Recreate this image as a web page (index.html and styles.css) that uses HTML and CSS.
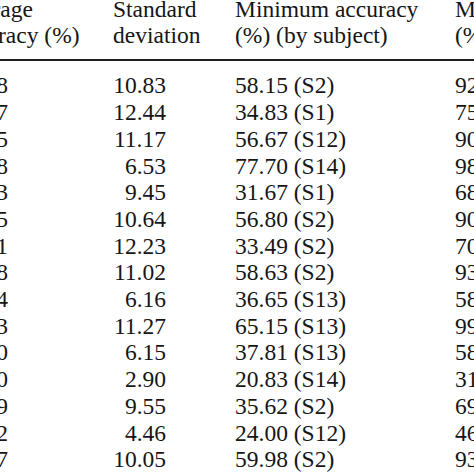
FILE: index.html
```html
<!DOCTYPE html>
<html>
<head>
<meta charset="utf-8">
<link rel="stylesheet" href="styles.css">
</head>
<body>
<div class="table">
  <div class="row head">
    <div class="cell">Average<br>accuracy (%)</div>
    <div class="cell">Standard<br>deviation</div>
    <div class="cell">Minimum accuracy<br>(%) (by subject)</div>
    <div class="cell">Maximum accuracy<br>(%) (by subject)</div>
  </div>
  <div class="rule"></div>
  <div class="body">
    <div class="row"><div class="cell">78.28</div><div class="cell"><span class="num">10.83</span></div><div class="cell">58.15 (S2)</div><div class="cell">92.50 (S9)</div></div>
    <div class="row"><div class="cell">58.17</div><div class="cell"><span class="num">12.44</span></div><div class="cell">34.83 (S1)</div><div class="cell">75.33 (S3)</div></div>
    <div class="row"><div class="cell">76.05</div><div class="cell"><span class="num">11.17</span></div><div class="cell">56.67 (S12)</div><div class="cell">90.83 (S9)</div></div>
    <div class="row"><div class="cell">88.98</div><div class="cell"><span class="num">6.53</span></div><div class="cell">77.70 (S14)</div><div class="cell">98.33 (S9)</div></div>
    <div class="row"><div class="cell">51.53</div><div class="cell"><span class="num">9.45</span></div><div class="cell">31.67 (S1)</div><div class="cell">68.33 (S9)</div></div>
    <div class="row"><div class="cell">76.55</div><div class="cell"><span class="num">10.64</span></div><div class="cell">56.80 (S2)</div><div class="cell">90.17 (S9)</div></div>
    <div class="row"><div class="cell">54.31</div><div class="cell"><span class="num">12.23</span></div><div class="cell">33.49 (S2)</div><div class="cell">70.67 (S3)</div></div>
    <div class="row"><div class="cell">77.18</div><div class="cell"><span class="num">11.02</span></div><div class="cell">58.63 (S2)</div><div class="cell">93.33 (S9)</div></div>
    <div class="row"><div class="cell">46.94</div><div class="cell"><span class="num">6.16</span></div><div class="cell">36.65 (S13)</div><div class="cell">58.00 (S9)</div></div>
    <div class="row"><div class="cell">81.83</div><div class="cell"><span class="num">11.27</span></div><div class="cell">65.15 (S13)</div><div class="cell">99.17 (S9)</div></div>
    <div class="row"><div class="cell">47.10</div><div class="cell"><span class="num">6.15</span></div><div class="cell">37.81 (S13)</div><div class="cell">58.50 (S9)</div></div>
    <div class="row"><div class="cell">25.80</div><div class="cell"><span class="num">2.90</span></div><div class="cell">20.83 (S14)</div><div class="cell">31.67 (S9)</div></div>
    <div class="row"><div class="cell">51.69</div><div class="cell"><span class="num">9.55</span></div><div class="cell">35.62 (S2)</div><div class="cell">69.17 (S9)</div></div>
    <div class="row"><div class="cell">34.82</div><div class="cell"><span class="num">4.46</span></div><div class="cell">24.00 (S12)</div><div class="cell">46.67 (S9)</div></div>
    <div class="row"><div class="cell">78.97</div><div class="cell"><span class="num">10.05</span></div><div class="cell">59.98 (S2)</div><div class="cell">93.33 (S9)</div></div>
  </div>
</div>
</body>
</html>
```
FILE: styles.css
```css
html, body {
  margin: 0;
  padding: 0;
  background: #ffffff;
  overflow: hidden;
}
.table {
  margin-left: -45px;
  margin-top: -3.6px;
  width: 800px;
  font-family: "Liberation Serif", "Times New Roman", serif;
  font-size: 23.5px;
  color: #161616;
}
.row {
  display: grid;
  grid-template-columns: 158px 122px 220px auto;
  white-space: nowrap;
}
.head {
  line-height: 26px;
}
.rule {
  height: 2px;
  background: #1e1e1e;
  margin-top: 11px;
  margin-bottom: 11px;
}
.body .row {
  line-height: 26.7px;
}
.num {
  display: inline-block;
  width: 53px;
  text-align: right;
}
```
